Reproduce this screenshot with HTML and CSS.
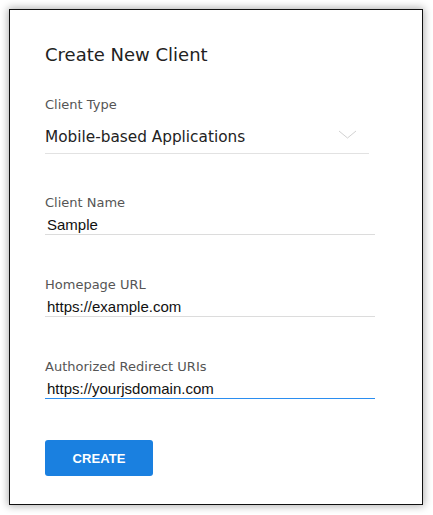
FILE: index.html
```html
<!DOCTYPE html>
<html lang="en">
<head>
<meta charset="utf-8">
<title>Create New Client</title>
<link rel="stylesheet" href="styles.css">
</head>
<body>
<div class="card">
  <h1 class="title">Create New Client</h1>

  <div class="field field-select">
    <label class="label">Client Type</label>
    <div class="select">
      <span class="select-value">Mobile-based Applications</span>
      <svg class="chevron" width="19" height="9" viewBox="0 0 19 9" aria-hidden="true">
        <polyline points="1,1 9.5,8 18,1" fill="none" stroke="#d2d2d2" stroke-width="1"/>
      </svg>
    </div>
  </div>

  <div class="field">
    <label class="label">Client Name</label>
    <input class="input" type="text" value="Sample">
  </div>

  <div class="field">
    <label class="label">Homepage URL</label>
    <input class="input" type="text" value="https://example.com">
  </div>

  <div class="field">
    <label class="label">Authorized Redirect URIs</label>
    <input class="input input-focused" type="text" value="https://yourjsdomain.com">
  </div>

  <button class="btn" type="button">CREATE</button>
</div>
</body>
</html>
```

FILE: styles.css
```css
* {
  box-sizing: border-box;
}

html, body {
  margin: 0;
  padding: 0;
  background: #ffffff;
}

body {
  padding: 9px;
}

.card {
  width: 414px;
  height: 496px;
  border: 1px solid #111111;
  background: #ffffff;
  box-shadow: 0 0 8px 1px rgba(0, 0, 0, 0.32);
  padding: 34px 0 0 35px;
  display: flex;
  flex-direction: column;
  align-items: flex-start;
}

.title {
  margin: 0 0 31px 0;
  font-family: "DejaVu Sans", sans-serif;
  font-weight: normal;
  font-size: 18px;
  line-height: 22px;
  color: #222222;
}

.field {
  display: flex;
  flex-direction: column;
  width: 330px;
  margin-bottom: 42px;
}

.field-select {
  width: 324px;
  margin-bottom: 41px;
}

.label {
  font-family: "DejaVu Sans", sans-serif;
  font-size: 13px;
  line-height: 16px;
  color: #555555;
  margin-bottom: 5px;
}

.field-select .label {
  margin-bottom: 14px;
}

.select {
  display: flex;
  align-items: center;
  justify-content: space-between;
  height: 27px;
  padding: 0 12px 6px 0;
  border-bottom: 1px solid #e2e2e2;
}

.select-value {
  font-family: "DejaVu Sans", sans-serif;
  font-size: 15.3px;
  line-height: 20px;
  color: #222222;
}

.chevron {
  display: block;
  margin-top: -5px;
}

.input {
  display: block;
  width: 100%;
  height: 19px;
  margin: 0;
  padding: 0 0 2px 2px;
  border: none;
  border-bottom: 1px solid #dcdcdc;
  outline: none;
  background: transparent;
  font-family: "Liberation Sans", Arial, sans-serif;
  font-size: 15px;
  line-height: 16px;
  color: #111111;
}

.input-focused {
  border-bottom-color: #2b8ef0;
}

.btn {
  margin-top: -1px;
  width: 108px;
  height: 36px;
  border: none;
  border-radius: 3px;
  background: #1a80e0;
  color: #ffffff;
  font-family: "Liberation Sans", Arial, sans-serif;
  font-weight: bold;
  font-size: 13px;
  letter-spacing: 0.1px;
  padding: 0;
  cursor: pointer;
}
```
